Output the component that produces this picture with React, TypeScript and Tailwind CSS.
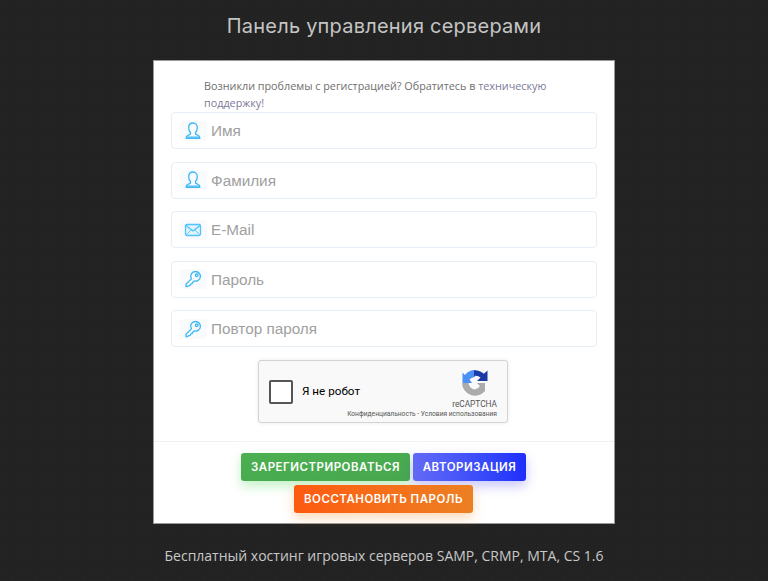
import React from "react";

function UserIcon() {
  return (
    <svg width="18" height="18" viewBox="0 0 18 18" fill="none" stroke="#3db8f5" strokeWidth="1.3" strokeLinecap="round" strokeLinejoin="round">
      <path d="M9 1c-2.700 0-4.300 2-4.300 4.700 0 2.100.8 3.800 1.800 4.800v1c0 .6-.3 1-.9 1.200l-2 .8c-.9.4-1.300 1-1.300 2v.9h13.400v-.9c0-1-.4-1.600-1.300-2l-2-.8c-.6-.2-.9-.6-.9-1.200v-1c1-1 1.800-2.700 1.800-4.800C13.300 3 11.700 1 9 1z" />
      <path d="M3 15.200h12" />
    </svg>
  );
}

function MailIcon() {
  return (
    <svg width="18" height="18" viewBox="0 0 18 18" fill="none" stroke="#4fc3fa" strokeWidth="1.300" strokeLinecap="round" strokeLinejoin="round">
      <rect x="1.500" y="3.500" width="15" height="11" rx="1.500" fill="#dff4fe" />
      <path d="M2 4.500l7 5.500 7-5.500" />
      <path d="M2.500 13.500l4.500-4.500M15.500 13.500L11 9" strokeWidth="0.900" />
    </svg>
  );
}

function KeyIcon() {
  return (
    <svg width="18" height="18" viewBox="0 0 18 18" fill="none" stroke="#3db8f5" strokeWidth="1.300" strokeLinecap="round" strokeLinejoin="round">
      <path d="M11.700 1.500a4.800 4.800 0 1 1-1.500 9.400l-1.700 1.500-.4 1.300-1.500.4-.4 1.300-1.700.4-1 .7H2v-2.300l5.400-5.300a4.800 4.800 0 0 1 4.300-7.400z" />
      <circle cx="12.700" cy="5.300" r="1.300" />
    </svg>
  );
}

function Field({ icon, placeholder, type = "text" }: { icon: React.ReactNode; placeholder: string; type?: string }) {
  return (
    <div className="flex h-[37px] items-center rounded-[4px] border border-[#e6edf5] bg-white pl-2">
      <span className="flex h-[20px] w-[27px] shrink-0 items-center justify-center rounded-[4px] bg-[#f8fafc] pr-[2px]">{icon}</span>
      <input
        type={type}
        placeholder={placeholder}
        className="ml-[4px] min-w-0 flex-1 bg-transparent pt-[2px] font-['Liberation_Sans',sans-serif] text-[15.300px] text-[#555] outline-none placeholder:text-[#a0a0a0]"
      />
    </div>
  );
}

function Recaptcha() {
  return (
    <div className="relative flex h-[63px] w-[250px] items-center rounded-[3px] border border-[#d3d3d3] bg-[#f9f9f9] pl-[10px] font-['Roboto',sans-serif] shadow-[0_0_4px_rgba(0,0,0,0.08)]">
      <span className="h-[24px] w-[24px] rounded-[2px] border-2 border-[#555] bg-white" />
      <span className="ml-[9px] text-[11.700px] text-black">Я не робот</span>
      <div className="absolute right-[10px] top-[8px] flex flex-col items-end">
        <svg width="28" height="28" viewBox="0 0 28 28" className="mr-[8px]">
          <path d="M1 14a13 13 0 0 0 23 8V14h-8l3 3a7.500 7.500 0 0 1-5 3.500 7 7 0 0 1-6.500-6.500z" fill="#ababab" />
          <path d="M14 1A13 13 0 0 0 4 6L1.500 3.500V14H11L8.500 10.500A7 7 0 0 1 14 8z" fill="#4a90f5" />
          <path d="M13 1.200A13 13 0 0 1 22.800 4.800L26.500 1.500V12H16l3.500-3.500A7.500 7.500 0 0 0 13 7z" fill="#1a3aa6" />
        </svg>
        <span className="mt-[2px] text-[8.300px] leading-[11px] text-[#555]">reCAPTCHA</span>
      </div>
      <span className="absolute bottom-[3px] right-[10px] text-[6.650px] leading-[9px] text-[#555]">Конфиденциальность - Условия использования</span>
    </div>
  );
}

function Btn({ children, className }: { children: React.ReactNode; className: string }) {
  return (
    <button className={`h-[28px] rounded-[3px] font-['Inter',sans-serif] text-[11.500px] font-semibold uppercase tracking-[0.5px] text-white ${className}`}>
      {children}
    </button>
  );
}

export default function App() {
  return (
    <div className="flex h-[581px] flex-col items-center bg-[#222222] bg-[radial-gradient(#262626_0.5px,transparent_0.5px)] bg-[length:3px_3px] font-['Inter',sans-serif]">
      <h1 className="mt-[14px] h-[46px] text-[20px] font-normal leading-[24px] tracking-[0.22px] text-[#c4c4c4]">Панель управления серверами</h1>
      <div className="h-[464px] w-[462px] border border-[#999] bg-white">
        <p className="px-[50px] pt-[16px] pb-[1px] font-['Open_Sans',sans-serif] text-[10.800px] leading-[17px] text-[#6f6f6f]">
          Возникли проблемы с регистрацией? Обратитесь в <a className="text-[#7d7a99]">техническую</a> <a className="text-[#7d7a99]">поддержку!</a>
        </p>
        <div className="flex flex-col gap-[12.600px] px-[17px]">
          <Field icon={<UserIcon />} placeholder="Имя" />
          <Field icon={<UserIcon />} placeholder="Фамилия" />
          <Field icon={<MailIcon />} placeholder="E-Mail" />
          <Field icon={<KeyIcon />} placeholder="Пароль" type="password" />
          <Field icon={<KeyIcon />} placeholder="Повтор пароля" type="password" />
        </div>
        <div className="mt-[13px] flex justify-center pr-[2px]">
          <Recaptcha />
        </div>
        <div className="mt-[18px] border-t border-[#f2f2f2] pt-[11px]">
          <div className="flex flex-wrap justify-center gap-x-[3px] gap-y-[4px] pr-[1px]">
            <Btn className="w-[169px] bg-gradient-to-br from-[#4caf50] to-[#47a84f] shadow-[0_5px_12px_rgba(76,215,90,0.35)]">Зарегистрироваться</Btn>
            <Btn className="w-[113px] bg-gradient-to-r from-[#6369f6] to-[#1f2dfb] shadow-[0_5px_12px_rgba(70,70,250,0.3)]">Авторизация</Btn>
            <Btn className="w-[179px] bg-gradient-to-r from-[#fd5a10] to-[#ec8022] shadow-[0_5px_12px_rgba(250,150,50,0.35)]">Восстановить пароль</Btn>
          </div>
        </div>
      </div>
      <p className="mt-[23px] font-['Open_Sans',sans-serif] text-[14px] leading-[17px] text-[#c8c8c8]">Бесплатный хостинг игровых серверов SAMP, CRMP, MTA, CS 1.6</p>
    </div>
  );
}
